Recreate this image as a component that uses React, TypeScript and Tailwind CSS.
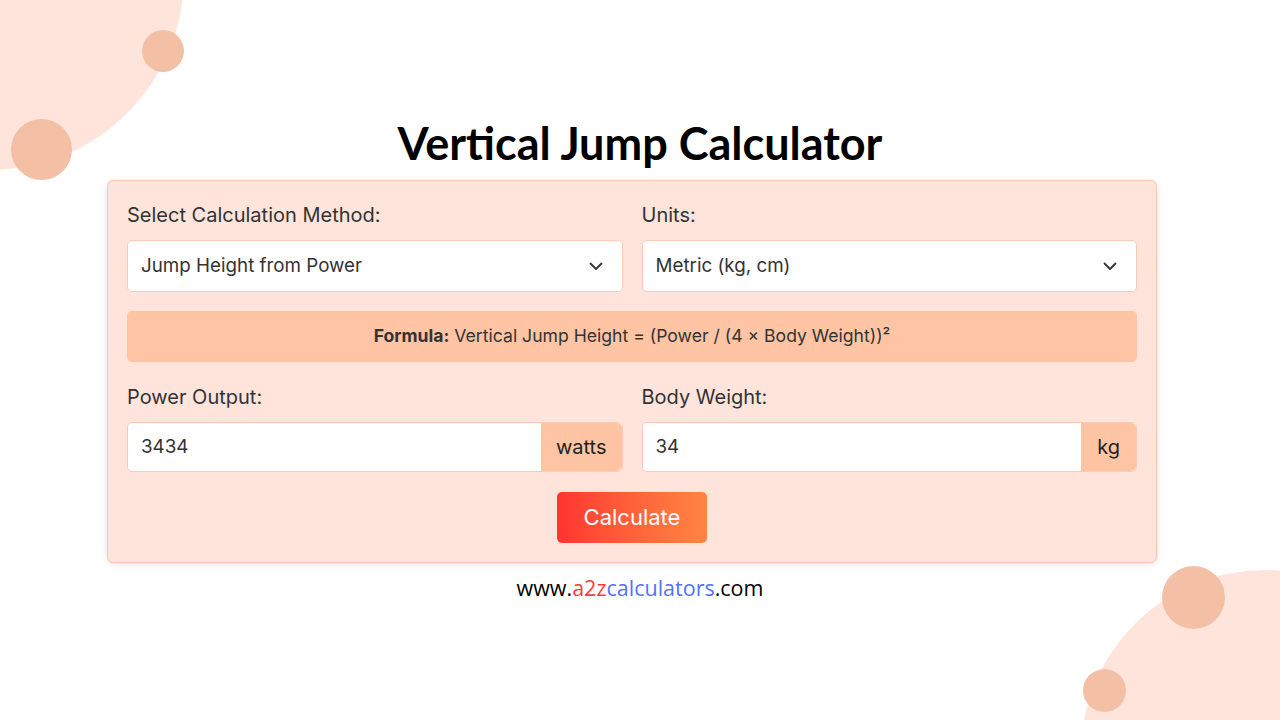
import React from "react";

function Chevron() {
  return (
    <svg width="14" height="9" viewBox="0 0 14 9" fill="none" className="shrink-0">
      <path d="M1.5 1.5 L7 7 L12.5 1.5" stroke="#333333" strokeWidth="1.8" strokeLinecap="round" strokeLinejoin="round" />
    </svg>
  );
}

function SelectBox({ value }: { value: string }) {
  return (
    <div className="flex h-[52px] items-center justify-between rounded-[5px] border border-[#fccab7] bg-white pl-[13px] pr-[19px] text-[18.8px] text-[#333333]">
      <span>{value}</span>
      <Chevron />
    </div>
  );
}

function InputGroup({ value, unit, unitPad }: { value: string; unit: string; unitPad: string }) {
  return (
    <div className="flex h-[50px] rounded-[5px] border border-[#fccab7] bg-white">
      <div className="flex flex-1 items-center pl-[13px] text-[18.8px] text-[#333333]">{value}</div>
      <div className={`flex items-center rounded-r-[5px] bg-[#ffc4a3] text-[20px] text-[#222222] ${unitPad}`}>{unit}</div>
    </div>
  );
}

export default function App() {
  return (
    <div className="relative h-[720px] w-full overflow-hidden bg-white">
      {/* decorations */}
      <div className="absolute left-[-204px] top-[-218px] h-[388px] w-[388px] rounded-full bg-[#fee4da]" />
      <div className="absolute left-[142px] top-[30px] h-[42px] w-[42px] rounded-full bg-[#f4c0a5]" />
      <div className="absolute left-[11px] top-[119px] h-[61px] w-[61px] rounded-full bg-[#f4c0a5]" />
      <div className="absolute left-[1081px] top-[570px] h-[368px] w-[368px] rounded-full bg-[#fee4da]" />
      <div className="absolute left-[1162px] top-[566px] h-[63px] w-[63px] rounded-full bg-[#f4c0a5]" />
      <div className="absolute left-[1083px] top-[669px] h-[43px] w-[43px] rounded-full bg-[#f4c0a5]" />

      <div className="relative flex flex-col items-center pt-[116px]" style={{ fontFamily: "Inter, 'Noto Sans', sans-serif" }}>
        <h1
          className="text-[45px] font-bold leading-[54px] text-black"
          style={{ fontFamily: "Lato, 'Open Sans', sans-serif" }}
        >
          Vertical Jump Calculator
        </h1>

        <div className="mt-[10px] flex w-full justify-center pr-[16px]">
          <div className="w-[1050px] rounded-[6px] border border-[#fcc9b5] bg-[#ffe4dc] px-[19px] pb-[19px] pt-[20px] shadow-[0_1px_6px_rgba(0,0,0,0.12)]">
            <div className="grid grid-cols-2 gap-x-[19px]">
              <div>
                <div className="mb-[11px] text-[20px] leading-[28px] text-[#333333]">Select Calculation Method:</div>
                <SelectBox value="Jump Height from Power" />
              </div>
              <div>
                <div className="mb-[11px] text-[20px] leading-[28px] text-[#333333]">Units:</div>
                <SelectBox value="Metric (kg, cm)" />
              </div>
            </div>

            <div className="mt-[19px] flex h-[51px] items-center justify-center rounded-[5px] bg-[#ffc4a3] text-[17.6px] text-[#333333]">
              <span>
                <span className="font-bold">Formula:</span> Vertical Jump Height = (Power / (4 × Body Weight))²
              </span>
            </div>

            <div className="mt-[21px] grid grid-cols-2 gap-x-[19px]">
              <div>
                <div className="mb-[11px] text-[20px] leading-[28px] text-[#333333]">Power Output:</div>
                <InputGroup value="3434" unit="watts" unitPad="px-[15px]" />
              </div>
              <div>
                <div className="mb-[11px] text-[20px] leading-[28px] text-[#333333]">Body Weight:</div>
                <InputGroup value="34" unit="kg" unitPad="px-[16px]" />
              </div>
            </div>

            <div className="mt-[20px] flex justify-center">
              <button className="flex h-[51px] w-[150px] items-center justify-center rounded-[5px] bg-gradient-to-r from-[#ff3131] to-[#ff8443] text-[22px] text-white">
                Calculate
              </button>
            </div>
          </div>
        </div>

        <div
          className="mt-[11px] text-[21.5px] leading-[28px] text-black"
          style={{ fontFamily: "'Open Sans', Lato, sans-serif" }}
        >
          www.<span className="text-[#ff3b3b]">a2z</span>
          <span className="text-[#5271ff]">calculators</span>.com
        </div>
      </div>
    </div>
  );
}
